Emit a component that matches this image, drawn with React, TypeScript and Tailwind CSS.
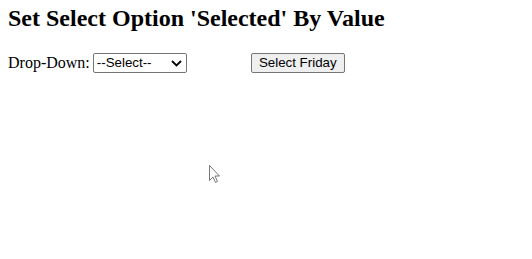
import React from "react";

export default function App() {
  return (
    <div className="relative w-[532px] h-[259px] bg-white text-black font-['Liberation_Serif',serif] text-[16px] p-2">
      <h2 className="text-[24px] font-bold leading-[28px] mt-[-4px]">Set Select Option 'Selected' By Value</h2>
      <div className="mt-[21px] flex items-center h-[20px]">
        <span className="leading-[20px]">Drop-Down:</span>
        <div className="ml-[3px] relative w-[94px] h-[20px] border border-[#767676] rounded-[2px] bg-white flex items-center">
          <span className="pl-[3px] font-['Liberation_Sans',sans-serif] text-[13.33px] leading-none">--Select--</span>
          <svg className="absolute right-[4px] top-[6px]" width="11" height="7" viewBox="0 0 11 7">
            <path d="M1 1 L5.5 5.5 L10 1" fill="none" stroke="#000" strokeWidth="1.8" />
          </svg>
        </div>
        <button className="ml-[64px] w-[94px] h-[20px] border border-[#767676] rounded-[2px] bg-[#efefef] font-['Liberation_Sans',sans-serif] text-[13.33px] leading-none flex items-center justify-center">
          Select Friday
        </button>
      </div>
      <svg className="absolute left-[209px] top-[165px]" width="12" height="19" viewBox="0 0 12 19">
        <path d="M0.5 0.5 L0.5 15.5 L4 12 L6.5 17.5 L8.5 16.5 L6 11 L10.5 11 Z" fill="#fff" stroke="#555" strokeWidth="0.8" />
      </svg>
    </div>
  );
}
